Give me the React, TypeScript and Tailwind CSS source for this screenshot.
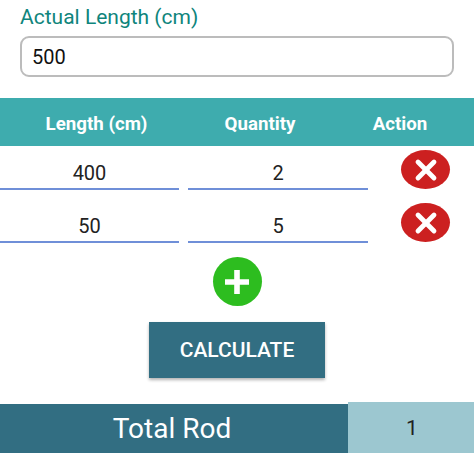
import { X } from "lucide-react";

const ROWS = [
  { length: "400", quantity: "2" },
  { length: "50", quantity: "5" },
];

export default function App() {
  return (
    <div className="w-[474px] h-[453px] overflow-hidden bg-white font-['Roboto',sans-serif]">
      {/* Actual length */}
      <div className="px-5 pt-[4px]">
        <p className="text-[21px] leading-[26px] text-[#0f857c]">Actual Length (cm)</p>
        <div className="mt-[6px] h-[41px] flex items-center pl-[10px] rounded-[9px] border-2 border-[#bcbcbc] text-[20px] text-[#111]">
          500
        </div>
      </div>

      {/* Table header */}
      <div className="mt-[21px] h-[48px] pt-[4px] flex items-center bg-[#3eacae] text-white text-[18.7px] font-bold">
        <div className="w-[193px] text-center">Length (cm)</div>
        <div className="w-[134px] text-center">Quantity</div>
        <div className="w-[146px] text-center">Action</div>
      </div>

      {/* Rows */}
      <div className="flex flex-col">
        {ROWS.map((row) => (
          <div key={row.length} className="h-[53px] flex items-start">
            <div className="w-[179px] h-[44px] flex items-end justify-center border-b-2 border-[#6f8fd8] text-[20px] text-[#222]">
              {row.length}
            </div>
            <div className="ml-[9px] w-[180px] h-[44px] flex items-end justify-center border-b-2 border-[#6f8fd8] text-[20px] text-[#222]">
              {row.quantity}
            </div>
            <div className="ml-[33px] mt-[4px] w-[49px] h-[39px] rounded-[50%] bg-[#cc2020] flex items-center justify-center">
              <X size={32} strokeWidth={3.6} className="text-white" />
            </div>
          </div>
        ))}
      </div>

      {/* Add */}
      <div className="flex justify-center mt-[5px]">
        <div className="w-[49px] h-[49px] rounded-full bg-[#2dbd1f] flex items-center justify-center">
          <svg width="26" height="26" viewBox="0 0 26 26" className="text-white">
            <path d="M13 1v24M1 13h24" stroke="currentColor" strokeWidth="5.6" fill="none" />
          </svg>
        </div>
      </div>

      {/* Calculate */}
      <div className="flex justify-center mt-[16px]">
        <button className="w-[176px] h-[56px] pt-[1px] bg-[#326e82] text-white text-[21px] font-medium shadow-[0_2px_3px_rgba(0,0,0,0.3)]">
          CALCULATE
        </button>
      </div>

      {/* Total */}
      <div className="mt-[24px] flex items-end">
        <div className="w-[348px] h-[49px] pr-[4px] bg-[#326e82] flex items-center justify-center text-white text-[28px]">
          Total Rod
        </div>
        <div className="flex-1 h-[51px] pt-[3px] pl-[2px] bg-[#9cc7d0] flex items-center justify-center text-[21px] text-[#222]">
          1
        </div>
      </div>
    </div>
  );
}
